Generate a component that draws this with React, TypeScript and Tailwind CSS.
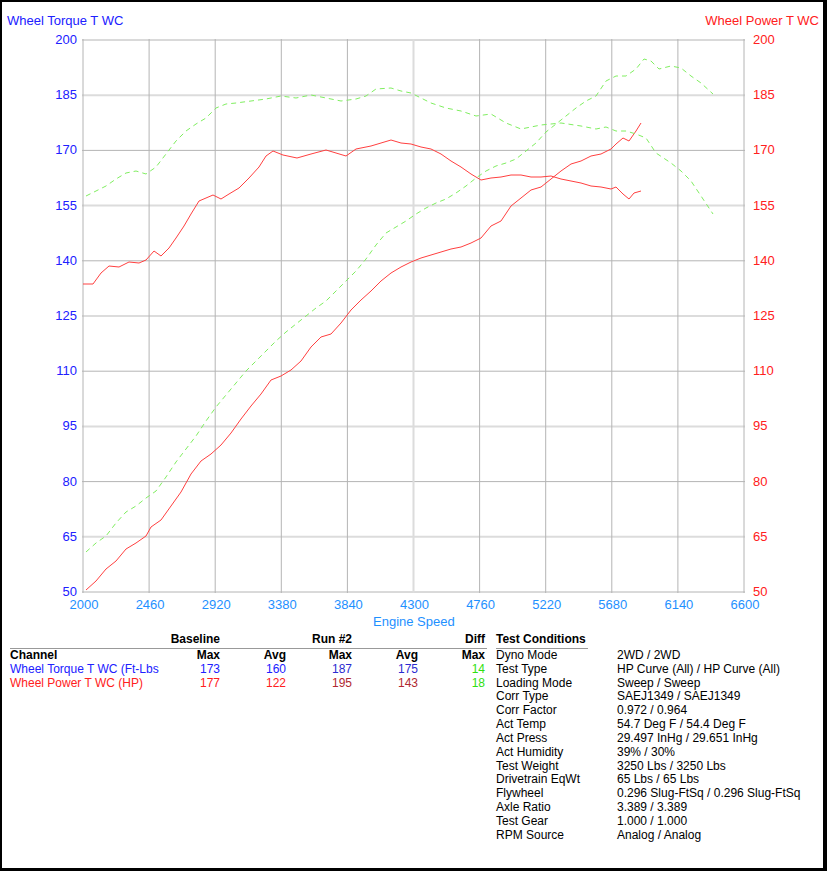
const X0 = 0;
const rT: [number, number][] = [[82,283],[92,283],[100,272],[108,265],[118,266],[128,261],[138,262],[145,259],[153,250],[160,255],[168,247],[175,237],[183,225],[190,213],[198,200],[205,197],[212,194],[220,198],[228,193],[238,187],[248,177],[258,166],[265,155],[272,150],[282,154],[296,157],[310,153],[325,149],[335,152],[345,155],[355,148],[370,145],[380,142],[390,139],[400,142],[410,143],[420,146],[430,148],[440,153],[450,160],[460,166],[470,173],[480,179],[490,177],[500,176],[510,174],[520,174],[530,176],[540,176],[550,175],[560,178],[570,180],[580,182],[590,185],[600,186],[610,188],[615,186],[622,193],[628,198],[633,192],[640,190]];
const rP: [number, number][] = [[85,589],[95,580],[105,568],[115,560],[125,548],[135,542],[145,535],[150,526],[160,519],[170,505],[180,491],[190,473],[200,460],[210,453],[220,444],[230,432],[240,418],[250,405],[260,393],[270,379],[280,375],[290,369],[300,360],[310,346],[320,336],[330,333],[340,322],[350,309],[360,299],[370,290],[380,280],[390,272],[400,266],[410,261],[420,257],[430,254],[440,251],[450,248],[460,246],[470,242],[480,237],[490,225],[500,220],[510,205],[520,197],[530,189],[540,186],[550,178],[560,170],[570,163],[580,160],[590,155],[600,153],[610,148],[615,143],[622,137],[628,140],[635,130],[640,122]];
const gT: [number, number][] = [[85,195],[95,190],[105,185],[115,178],[125,172],[135,170],[145,173],[155,166],[165,153],[175,140],[185,130],[195,123],[205,117],[215,107],[225,103],[235,102],[250,100],[265,98],[280,95],[295,97],[310,94],[325,97],[340,100],[355,98],[365,95],[375,88],[390,87],[400,90],[410,92],[420,97],[430,102],[445,107],[460,110],[475,115],[490,113],[505,122],[520,128],[540,124],[560,122],[580,125],[595,128],[605,126],[615,130],[625,130],[635,133],[645,137],[655,152],[670,162],[680,170],[690,180],[700,195],[712,213]];
const gP: [number, number][] = [[85,551],[95,542],[105,535],[115,522],[125,511],[135,505],[145,497],[155,490],[165,476],[175,461],[185,448],[195,435],[205,420],[215,406],[225,394],[235,382],[245,370],[255,360],[265,350],[275,340],[285,331],[295,323],[305,315],[315,307],[325,300],[335,290],[345,280],[355,270],[365,258],[375,244],[385,232],[395,226],[405,220],[415,213],[425,207],[435,202],[445,198],[455,192],[465,185],[475,177],[485,170],[495,165],[505,162],[515,158],[525,150],[535,142],[545,131],[555,123],[565,115],[575,107],[585,100],[595,95],[605,80],[615,75],[625,75],[635,68],[643,58],[650,60],[658,68],[670,65],[680,67],[690,75],[700,82],[712,93]];

const pts = (a: [number, number][]) => a.map(([x, y]) => `${x - 82 + X0},${y - 39}`).join(" ");

const yl = ["200","185","170","155","140","125","110","95","80","65","50"];
const xl = ["2000","2460","2920","3380","3840","4300","4760","5220","5680","6140","6600"];
const cond: [string, string][] = [
  ["Dyno Mode","2WD / 2WD"],["Test Type","HP Curve (All) / HP Curve (All)"],["Loading Mode","Sweep / Sweep"],
  ["Corr Type","SAEJ1349 / SAEJ1349"],["Corr Factor","0.972 / 0.964"],["Act Temp","54.7 Deg F / 54.4 Deg F"],
  ["Act Press","29.497 InHg / 29.651 InHg"],["Act Humidity","39% / 30%"],["Test Weight","3250 Lbs / 3250 Lbs"],
  ["Drivetrain EqWt","65 Lbs / 65 Lbs"],["Flywheel","0.296 Slug-FtSq / 0.296 Slug-FtSq"],["Axle Ratio","3.389 / 3.389"],
  ["Test Gear","1.000 / 1.000"],["RPM Source","Analog / Analog"],
];

export default function App() {
  return (
    <div className="w-[827px] h-[871px] bg-white border-black border-t-2 border-l-2 border-r-4 border-b-[3px] text-[12px] leading-[14px] overflow-hidden" style={{ fontFamily: '"Liberation Sans", Arial, sans-serif' }}>
      <div className="flex justify-between pl-[5px] pr-[4px] pt-[12px] text-[13px] leading-[14px]">
        <span className="text-[#2020ff]">Wheel Torque T WC</span>
        <span className="text-[#ff2020]">Wheel Power T WC</span>
      </div>
      <div className="flex mt-[5px]">
        <div className="w-[80px] h-[566px] flex flex-col justify-between items-end pr-[5px] text-[13px] text-[#2020ff]">
          {yl.map(v => <span key={v} className="leading-[14px]">{v}</span>)}
        </div>
        <svg width="663" height="554" className="mt-[6px] shrink-0">
          {Array.from({ length: 11 }, (_, i) => (
            <line key={"h" + i} x1="0" x2="663" y1={1 + i * 55.2} y2={1 + i * 55.2} stroke={i % 2 ? "#dcdcdc" : "#b4b4b4"} strokeWidth={i % 2 ? 2 : 1} />
          ))}
          {Array.from({ length: 11 }, (_, i) => (
            <line key={"v" + i} y1="0" y2="554" x1={1 + i * 66.1} x2={1 + i * 66.1} stroke={i === 5 ? "#dcdcdc" : "#b4b4b4"} strokeWidth={i === 5 ? 2 : 1} />
          ))}
          <g transform="translate(1,1)" fill="none">
            <polyline points={pts(rT)} stroke="#ff4040" strokeWidth="1" />
            <polyline points={pts(rP)} stroke="#ff4040" strokeWidth="1" />
            <polyline points={pts(gT)} stroke="#80ee60" strokeWidth="1" strokeDasharray="5 4" />
            <polyline points={pts(gP)} stroke="#80ee60" strokeWidth="1" strokeDasharray="5 4" />
          </g>
        </svg>
        <div className="h-[566px] flex flex-col justify-between pl-[8px] text-[13px] text-[#ff2020]">
          {yl.map(v => <span key={v} className="leading-[14px]">{v}</span>)}
        </div>
      </div>
      <div className="relative h-[16px] ml-[62px] w-[700px] text-[13px] text-[#1e90ff]">
        {xl.map((v, i) => (
          <span key={v} className="absolute top-[-1px] w-[40px] text-center" style={{ left: i * 66.1 }}>{v}</span>
        ))}
      </div>
      <div className="text-[13px] text-[#1e90ff] pl-[371px] leading-[14px]">Engine Speed</div>
      <div className="flex mt-[4px] leading-[13.85px]">
        <div className="ml-[8px] w-[477px]">
          <div className="grid grid-cols-[150px_60px_66px_66px_66px_67px] font-bold text-right border-b border-[#999] pb-[1px]">
            <span></span><span>Baseline</span><span></span><span>Run #2</span><span></span><span>Diff</span>
          </div>
          <div className="grid grid-cols-[150px_60px_66px_66px_66px_67px] font-bold text-right">
            <span className="text-left">Channel</span><span>Max</span><span>Avg</span><span>Max</span><span>Avg</span><span>Max</span>
          </div>
          <div className="grid grid-cols-[150px_60px_66px_66px_66px_67px] text-right text-[#2020ff]">
            <span className="text-left">Wheel Torque T WC (Ft-Lbs</span><span>173</span><span>160</span><span className="text-[#2a2ad0]">187</span><span className="text-[#2a2ad0]">175</span><span className="text-[#30e010]">14</span>
          </div>
          <div className="grid grid-cols-[150px_60px_66px_66px_66px_67px] text-right text-[#ff2020]">
            <span className="text-left">Wheel Power T WC (HP)</span><span>177</span><span>122</span><span className="text-[#b02830]">195</span><span className="text-[#b02830]">143</span><span className="text-[#30e010]">18</span>
          </div>
        </div>
        <div className="ml-[9px]">
          <div className="font-bold w-[92px] border-b border-[#999] pb-[1px]">Test Conditions</div>
          {cond.map(([k, v]) => (
            <div key={k} className="flex"><span className="w-[121px]">{k}</span><span>{v}</span></div>
          ))}
        </div>
      </div>
    </div>
  );
}
